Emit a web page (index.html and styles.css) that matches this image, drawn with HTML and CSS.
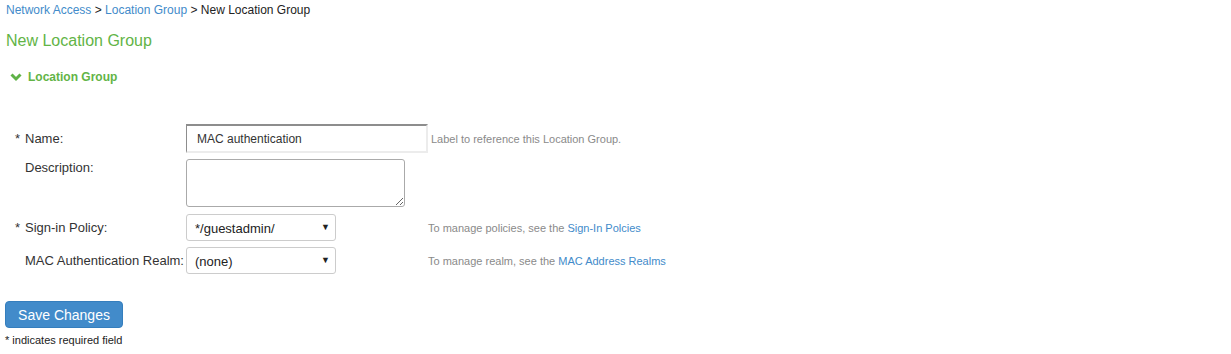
FILE: index.html
```html
<!DOCTYPE html>
<html lang="en">
<head>
    <meta charset="UTF-8">
    <title>New Location Group</title>
    <link rel="stylesheet" href="styles.css">
</head>
<body>

<div class="breadcrumb">
    <a href="#">Network Access</a> &gt; <a href="#">Location Group</a> &gt; New Location Group
</div>

<h1 class="page-title">New Location Group</h1>

<div class="section-head">
    <svg class="chevron" width="12" height="10" viewBox="0 0 12 10">
        <polyline points="1.5,2.5 6,7 10.5,2.5" fill="none" stroke="#5fb247" stroke-width="3"/>
    </svg>
    Location Group
</div>

<form class="form">
    <div class="form-row row-name">
        <label class="field-label"><span class="req">*</span>Name:</label>
        <input class="text-input" type="text" value="MAC authentication">
        <span class="help">Label to reference this Location Group.</span>
    </div>

    <div class="form-row row-desc">
        <label class="field-label"><span class="req"></span>Description:</label>
        <textarea class="text-area"></textarea>
    </div>

    <div class="form-row row-select">
        <label class="field-label"><span class="req">*</span>Sign-in Policy:</label>
        <div class="field-cell">
            <span class="select-wrap">
                <select class="select">
                    <option>*/guestadmin/</option>
                </select>
            </span>
        </div>
        <span class="help">To manage policies, see the <a href="#">Sign-In Polcies</a></span>
    </div>

    <div class="form-row row-select">
        <label class="field-label"><span class="req"></span>MAC Authentication Realm:</label>
        <div class="field-cell">
            <span class="select-wrap">
                <select class="select">
                    <option>(none)</option>
                </select>
            </span>
        </div>
        <span class="help">To manage realm, see the <a href="#">MAC Address Realms</a></span>
    </div>

    <button class="btn-save" type="button">Save Changes</button>
    <p class="note">* indicates required field</p>
</form>

</body>
</html>
```

FILE: styles.css
```css
body {
    font-family: "Liberation Sans", Arial, sans-serif;
    margin: 0;
    padding: 0 5px;
    background-color: #fff;
    color: #333;
}

a {
    color: #428bca;
    text-decoration: none;
}

.breadcrumb {
    font-size: 12px;
    line-height: 14px;
    padding: 3px 1px 0;
    color: #222;
}

.page-title {
    font-size: 16px;
    font-weight: normal;
    line-height: 18px;
    color: #62b446;
    margin: 15px 0 0 1px;
}

.section-head {
    display: flex;
    align-items: center;
    font-size: 12px;
    font-weight: bold;
    color: #62b446;
    margin: 20px 0 0 6px;
    line-height: 14px;
}

.chevron {
    margin-left: -1px;
    margin-right: 6px;
}

.form {
    margin-top: 40px;
}

.form-row {
    display: flex;
    align-items: center;
}

.field-label {
    width: 171px;
    padding-left: 10px;
    font-size: 13px;
    color: #333;
    flex-shrink: 0;
}

.req {
    display: inline-block;
    width: 10px;
}

.text-input {
    box-sizing: border-box;
    width: 242px;
    height: 29px;
    margin: 0;
    padding: 0 10px;
    font-family: inherit;
    font-size: 12px;
    color: #333;
    border-style: solid;
    border-width: 2px 2px 2px 1px;
    border-color: #8d8d8d #ececec #ececec #8d8d8d;
}

.help {
    font-size: 11px;
    color: #8a8a8a;
    margin-left: 3px;
}

.row-desc {
    align-items: flex-start;
    margin-top: 6px;
}

.row-desc .field-label {
    padding-top: 1px;
}

.text-area {
    box-sizing: border-box;
    width: 219px;
    height: 48px;
    margin: 0;
    border: 1px solid #aaa;
    border-radius: 3px;
}

.row-select {
    margin-top: 7px;
}

.row-select + .row-select {
    margin-top: 6px;
}

.field-cell {
    width: 242px;
}

.select-wrap {
    position: relative;
    display: inline-block;
}

.select-wrap::after {
    content: "\25BC";
    position: absolute;
    right: 6px;
    top: 8px;
    font-size: 9px;
    color: #222;
    pointer-events: none;
}

.select {
    appearance: none;
    -webkit-appearance: none;
    box-sizing: border-box;
    width: 150px;
    height: 27px;
    margin: 0;
    padding: 2px 8px 0;
    font-family: inherit;
    font-size: 13px;
    color: #222;
    background: #fff;
    border: 1px solid #ccc;
    border-radius: 3px;
}

.row-select .help {
    margin-left: 0;
}

.btn-save {
    display: block;
    margin-top: 27px;
    height: 27px;
    width: 118px;
    padding: 0;
    font-family: inherit;
    font-size: 14px;
    color: #fff;
    background-color: #428bca;
    border: 1px solid #357ebd;
    border-radius: 4px;
}

.note {
    font-size: 11px;
    margin: 6px 0 0;
    color: #222;
}
```
